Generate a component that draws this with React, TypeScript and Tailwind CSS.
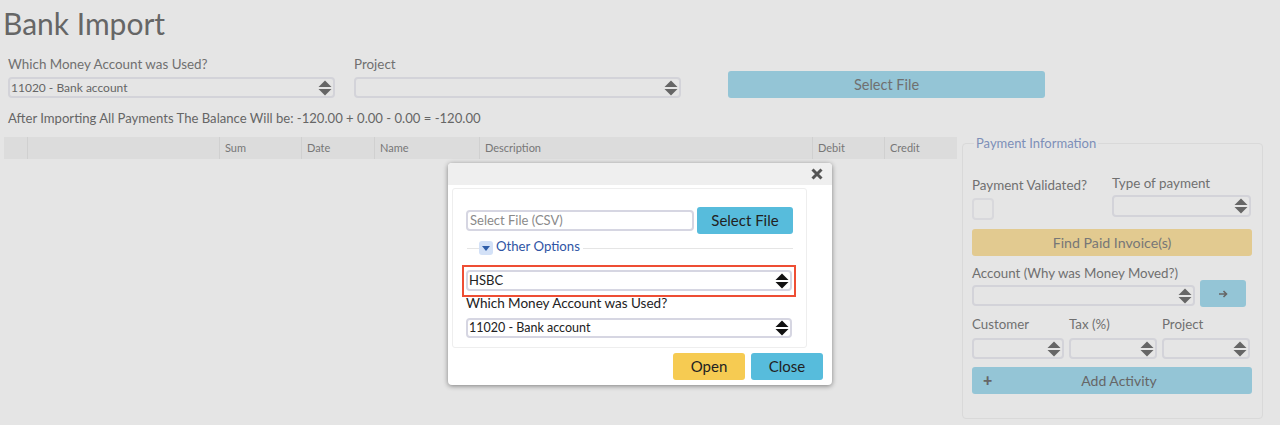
const font = "font-['Lato','Liberation_Sans',sans-serif]";

function Arrows({ dark = false }: { dark?: boolean }) {
  return (
    <svg width="14" height="16" viewBox="0 0 14 16" className={dark ? 'shrink-0 fill-[#111]' : 'shrink-0 fill-[#666]'}>
      <path d="M7 0.5 13.5 7H0.5z" />
      <path d="M7 15.5 0.5 9h13z" />
    </svg>
  );
}

function Select({ value, className, dark = false }: { value?: string; className: string; dark?: boolean }) {
  return (
    <div
      className={`flex items-center justify-between rounded-[4px] border-2 pl-[1px] pr-[1px] ${
        dark ? 'border-[#d6d6e2] bg-white text-[#222]' : 'border-[#d3d3d9] bg-[#e5e5e5] text-[#666]'
      } ${className}`}
    >
      <span className="whitespace-nowrap">{value}</span>
      <Arrows dark={dark} />
    </div>
  );
}

function HeaderCell({ label, className }: { label?: string; className: string }) {
  return <div className={`border-r border-[#d0d0d0] pl-[5px] text-[11px] leading-[21px] text-[#777] ${className}`}>{label}</div>;
}

function PaymentPanel() {
  return (
    <fieldset className="ml-[5px] mt-[-1px] h-[283px] w-[300px] rounded-[4px] border border-[#d9d9d9] pl-[9px] pr-[10px]">
      <legend className="ml-[2px] px-[2px] text-[13px] leading-[15px] text-[#7d8fb8]">Payment Information</legend>
      <div className="mt-[24px] flex">
        <div className="w-[140px] pt-[2px]">
          <div className="text-[13.4px] leading-[16px] text-[#707070]">Payment Validated?</div>
          <div className="mt-[5px] h-[22px] w-[22px] rounded-[4px] border-2 border-[#d8d8dc]" />
        </div>
        <div>
          <div className="text-[13.4px] leading-[16px] text-[#707070]">Type of payment</div>
          <Select className="mt-[4px] h-[22px] w-[139px]" />
        </div>
      </div>
      <button className="mt-[9px] block h-[27px] w-[280px] rounded-[3px] bg-[#e2ca90] text-[14.2px] text-[#777]">Find Paid Invoice(s)</button>
      <div className="mt-[9px] text-[13.3px] leading-[16px] text-[#707070]">Account (Why was Money Moved?)</div>
      <div className="mt-[-1px] flex items-end gap-[5px]">
        <Select className="mb-[1px] h-[21px] w-[223px]" />
        <button className="flex h-[27px] w-[46px] items-center justify-center rounded-[3px] bg-[#94c5d6]">
          <svg width="9" height="8" viewBox="0 0 9 8" fill="none" className="stroke-[#666]" strokeWidth="1.6">
            <path d="M0 4h7.5M4.5 1l3 3-3 3" />
          </svg>
        </button>
      </div>
      <div className="mt-[9px] flex gap-[5px] text-[13.3px] leading-[16px] text-[#707070]">
        <div>
          <div>Customer</div>
          <Select className="mt-[6px] h-[21px] w-[92px]" />
        </div>
        <div>
          <div>Tax (%)</div>
          <Select className="mt-[6px] h-[21px] w-[88px]" />
        </div>
        <div>
          <div>Project</div>
          <Select className="mt-[6px] h-[21px] w-[88px]" />
        </div>
      </div>
      <button className="relative mt-[8px] block h-[27px] w-[280px] rounded-[3px] bg-[#94c5d6] text-[14px] text-[#666]">
        <span className="absolute left-[11px] top-[1px] text-[16px] font-black">+</span>
        <span className="pl-[14px]">Add Activity</span>
      </button>
    </fieldset>
  );
}

function ImportModal() {
  return (
    <div className="absolute left-[448px] top-[163px] h-[222px] w-[384px] rounded-[4px] bg-white shadow-[0_1px_5px_rgba(0,0,0,0.45)]">
      <div className="flex h-[22px] items-center justify-end rounded-t-[4px] bg-[#efefef] pr-[9px]">
        <svg width="12" height="12" viewBox="0 0 12 12" className="stroke-[#555]" strokeWidth="3">
          <path d="M1.5 1.5l9 9M10.5 1.5l-9 9" />
        </svg>
      </div>
      <div className="ml-[4px] mt-[3px] h-[160px] w-[355px] rounded-[3px] border border-[#eeeeee] pl-[13px] pr-[13px] pt-[18px]">
        <div className="flex items-center gap-[3px]">
          <div className="flex h-[21px] w-[228px] items-center rounded-[4px] border-2 border-[#d6d6e2] pl-[2px] text-[13px] text-[#8a8a8a]">Select File (CSV)</div>
          <button className="h-[27px] w-[96px] rounded-[3px] bg-[#57bcdc] text-[15px] text-[#222]">Select File</button>
        </div>
        <div className="mt-[2px] flex h-[24px] items-center pl-[1px]">
          <div className="h-px w-[12px] bg-[#e5e5e5]" />
          <div className="flex h-[14px] w-[14px] items-center justify-center rounded-[3px] bg-[#d3e1f7]">
            <svg width="8" height="5" viewBox="0 0 8 5" className="fill-[#2f5da8]"><path d="M0 0h8L4 5z" /></svg>
          </div>
          <span className="mt-[-2px] px-[3px] text-[13.2px] text-[#2f55a4]">Other Options</span>
          <div className="h-px flex-1 bg-[#e5e5e5]" />
        </div>
        <div className="ml-[-4px] mt-[5px] w-[334px] border-2 border-[#ee4e34] px-[2px] pt-[3px] pb-[4px]">
          <Select dark value="HSBC" className="h-[21px] w-[326px] text-[13px]" />
        </div>
        <div className="mt-[-4px] text-[13.5px] leading-[20px] text-[#222]">Which Money Account was Used?</div>
        <Select dark value="11020 - Bank account" className="mt-[5px] h-[20px] w-[326px] text-[12.5px]" />
      </div>
      <div className="mr-[9px] mt-[5px] flex justify-end gap-[6px]">
        <button className="h-[27px] w-[72px] rounded-[3px] bg-[#f6cb52] text-[15px] text-[#222]">Open</button>
        <button className="h-[27px] w-[72px] rounded-[3px] bg-[#57bcdc] text-[15px] text-[#222]">Close</button>
      </div>
    </div>
  );
}

export default function App() {
  return (
    <div className={`relative h-[425px] w-[1280px] overflow-hidden bg-[#e5e5e5] ${font}`}>
      <h1 className="pl-[3px] pt-[5px] text-[30px] font-normal leading-[36px] text-[#666]">Bank Import</h1>
      <div className="mt-[15px] flex pl-[8px]">
        <div className="w-[346px]">
          <div className="text-[13.4px] leading-[16px] text-[#707070]">Which Money Account was Used?</div>
          <Select value="11020 - Bank account" className="mt-[5px] h-[21px] w-[327px] text-[12px]" />
        </div>
        <div className="w-[374px]">
          <div className="text-[13.4px] leading-[16px] text-[#707070]">Project</div>
          <Select className="mt-[5px] h-[21px] w-[327px]" />
        </div>
        <button className="mt-[15px] h-[27px] w-[317px] rounded-[3px] bg-[#94c5d6] text-[14.5px] text-[#707070]">Select File</button>
      </div>
      <div className="mt-[11px] pl-[8px] text-[13.1px] leading-[18px] text-[#666]">After Importing All Payments The Balance Will be: -120.00 + 0.00 - 0.00 = -120.00</div>
      <div className="mt-[10px] flex pl-[4px]">
        <div className="flex h-[22px] w-[953px] bg-[#dcdcdc]">
          <HeaderCell className="w-[24px]" />
          <HeaderCell className="w-[192px]" />
          <HeaderCell label="Sum" className="w-[82px]" />
          <HeaderCell label="Date" className="w-[73px]" />
          <HeaderCell label="Name" className="w-[105px]" />
          <HeaderCell label="Description" className="w-[333px]" />
          <HeaderCell label="Debit" className="w-[72px]" />
          <HeaderCell label="Credit" className="w-[72px] border-r-0" />
        </div>
        <PaymentPanel />
      </div>
      <ImportModal />
    </div>
  );
}
